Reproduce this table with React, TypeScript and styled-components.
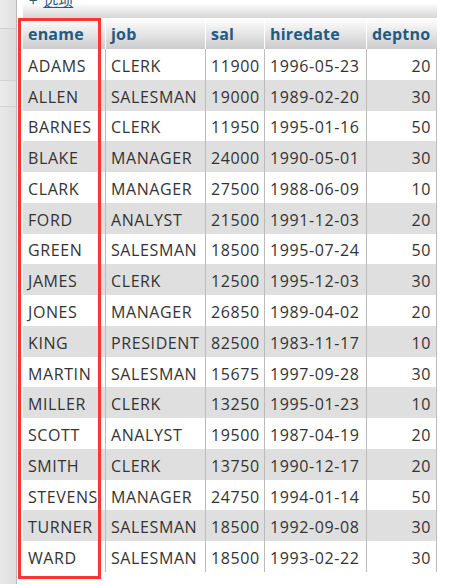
import React from "react";
import styled, { createGlobalStyle } from "styled-components";

const GlobalStyle = createGlobalStyle`
  html, body { margin: 0; padding: 0; background: #fff; overflow: hidden; }
  * { box-sizing: border-box; }
`;

const Page = styled.div`
  position: relative;
  display: flex;
  width: 456px;
  height: 584px;
  font-family: "Open Sans", "Noto Sans CJK SC", sans-serif;
`;

const Sidebar = styled.div`
  width: 17px;
  flex: none;
  background: linear-gradient(to right, #e9e9e9, #dedede);
  border-right: 1px solid #b9b9b9;
  display: flex;
  flex-direction: column;
`;

const SideBand = styled.div<{ $h: number; $shade: string }>`
  height: ${(p) => p.$h}px;
  background: ${(p) => p.$shade};
  border-bottom: 1px solid #d2d2d2;
`;

const Main = styled.div`
  flex: 1;
  padding-left: 6px;
  display: flex;
  flex-direction: column;
`;

const OptionsBar = styled.div`
  width: 414px;
  height: 18px;
  overflow: hidden;
  padding-left: 6px;
  background: linear-gradient(to bottom, #ffffff 15%, #d6d6d6 100%);
  display: flex;
  align-items: flex-start;
`;

const OptionsLink = styled.div`
  margin-top: -9px;
  font-size: 15px;
  line-height: 18px;
  color: #235a81;
  display: flex;
  gap: 6px;
  font-family: "Noto Sans CJK SC", sans-serif;
  span:last-child { text-decoration: underline; }
`;

const Table = styled.table`
  width: 414px;
  table-layout: fixed;
  border-collapse: separate;
  border-spacing: 0;
  font-size: 16px;
`;

const Th = styled.th<{ $w: number }>`
  width: ${(p) => p.$w}px;
  height: 31px;
  padding: 0 5px;
  text-align: left;
  font-weight: bold;
  letter-spacing: 0.2px;
  color: #235a81;
  background: linear-gradient(to bottom, #ffffff, #cccccc);
  border-right: 1px solid #ffffff;
  white-space: nowrap;
  overflow: hidden;
  &:last-child { border-right: none; }
`;

const Row = styled.tr<{ $even: boolean }>`
  background: ${(p) => (p.$even ? "#dfdfdf" : "#ffffff")};
`;

const Td = styled.td<{ $right?: boolean }>`
  height: 30.77px;
  padding: 3px 5px 0 5px;
  color: #333;
  letter-spacing: 0.6px;
  border-right: 1px solid #bbbbbb;
  text-align: ${(p) => (p.$right ? "right" : "left")};
  white-space: nowrap;
  overflow: hidden;
`;

const RedBox = styled.div`
  position: absolute;
  left: 18px;
  top: 18px;
  width: 83px;
  height: 561px;
  border: 3px solid #ff3535;
  pointer-events: none;
`;

const rows: [string, string, number, string, number][] = [
  ["ADAMS", "CLERK", 11900, "1996-05-23", 20],
  ["ALLEN", "SALESMAN", 19000, "1989-02-20", 30],
  ["BARNES", "CLERK", 11950, "1995-01-16", 50],
  ["BLAKE", "MANAGER", 24000, "1990-05-01", 30],
  ["CLARK", "MANAGER", 27500, "1988-06-09", 10],
  ["FORD", "ANALYST", 21500, "1991-12-03", 20],
  ["GREEN", "SALESMAN", 18500, "1995-07-24", 50],
  ["JAMES", "CLERK", 12500, "1995-12-03", 30],
  ["JONES", "MANAGER", 26850, "1989-04-02", 20],
  ["KING", "PRESIDENT", 82500, "1983-11-17", 10],
  ["MARTIN", "SALESMAN", 15675, "1997-09-28", 30],
  ["MILLER", "CLERK", 13250, "1995-01-23", 10],
  ["SCOTT", "ANALYST", 19500, "1987-04-19", 20],
  ["SMITH", "CLERK", 13750, "1990-12-17", 20],
  ["STEVENS", "MANAGER", 24750, "1994-01-14", 50],
  ["TURNER", "SALESMAN", 18500, "1992-09-08", 30],
  ["WARD", "SALESMAN", 18500, "1993-02-22", 30],
];

const cols: [string, number][] = [
  ["ename", 83],
  ["job", 100],
  ["sal", 59],
  ["hiredate", 102],
  ["deptno", 70],
];

export default function App() {
  return (
    <>
      <GlobalStyle />
      <Page>
        <Sidebar>
          <SideBand $h={29} $shade="linear-gradient(to right,#ececec,#e0e0e0)" />
          <SideBand $h={52} $shade="linear-gradient(to right,#e6e6e6,#dcdcdc)" />
          <SideBand $h={26} $shade="linear-gradient(to right,#ececec,#e0e0e0)" />
        </Sidebar>
        <Main>
          <OptionsBar>
            <OptionsLink>
              <span>+</span>
              <span>选项</span>
            </OptionsLink>
          </OptionsBar>
          <Table>
            <thead>
              <tr>
                {cols.map(([name, w]) => (
                  <Th key={name} $w={w}>
                    {name}
                  </Th>
                ))}
              </tr>
            </thead>
            <tbody>
              {rows.map((r, i) => (
                <Row key={r[0]} $even={i % 2 === 1}>
                  <Td>{r[0]}</Td>
                  <Td>{r[1]}</Td>
                  <Td>{r[2]}</Td>
                  <Td>{r[3]}</Td>
                  <Td $right>{r[4]}</Td>
                </Row>
              ))}
            </tbody>
          </Table>
        </Main>
        <RedBox />
      </Page>
    </>
  );
}
